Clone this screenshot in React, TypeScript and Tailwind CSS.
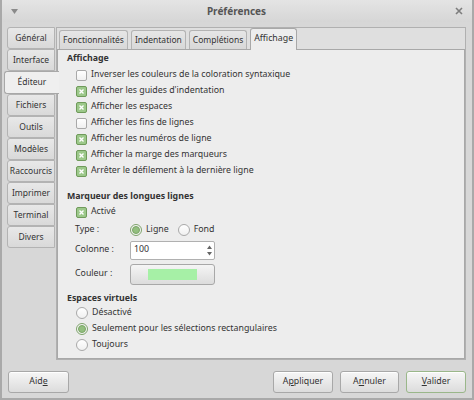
import React from 'react';

const sideTabs = ['Général', 'Interface', 'Éditeur', 'Fichiers', 'Outils', 'Modèles', 'Raccourcis', 'Imprimer', 'Terminal', 'Divers'];
const topTabs = ['Fonctionnalités', 'Indentation', 'Complétions', 'Affichage'];

const displayOptions: [string, boolean][] = [
  ['Inverser les couleurs de la coloration syntaxique', false],
  ["Afficher les guides d'indentation", true],
  ['Afficher les espaces', true],
  ['Afficher les fins de lignes', false],
  ['Afficher les numéros de ligne', true],
  ['Afficher la marge des marqueurs', true],
  ['Arrêter le défilement à la dernière ligne', true],
];

const virtualSpaces: [string, boolean][] = [
  ['Désactivé', false],
  ['Seulement pour les sélections rectangulaires', true],
  ['Toujours', false],
];

function Check({ on }: { on: boolean }) {
  if (!on) {
    return <span className="w-[11px] h-[11px] rounded-[2px] border border-[#a9a9a9] bg-gradient-to-b from-[#ffffff] to-[#f0f0f0] shrink-0" />;
  }
  return (
    <span className="w-[11px] h-[11px] rounded-[2px] border border-[#6f9a5a] bg-[#9cc88a] shrink-0 flex items-center justify-center">
      <svg width="7" height="7" viewBox="0 0 7 7">
        <path d="M1.5 1.5 L5.5 5.5 M5.5 1.5 L1.5 5.5" stroke="#ffffff" strokeWidth="1.4" />
      </svg>
    </span>
  );
}

function Radio({ on }: { on: boolean }) {
  return (
    <span
      className={
        on
          ? 'w-[12px] h-[12px] rounded-full border border-[#7ea36b] bg-[#f4f4f4] shrink-0 flex items-center justify-center'
          : 'w-[12px] h-[12px] rounded-full border border-[#a9a9a9] bg-gradient-to-b from-[#ffffff] to-[#f0f0f0] shrink-0 flex'
      }
    >
      {on && <span className="w-[8px] h-[8px] rounded-full bg-[#93bf7f] border border-[#7aa566]" />}
    </span>
  );
}

function Btn({ label, w, accent }: { label: React.ReactNode; w: string; accent?: boolean }) {
  return (
    <div
      className={`${w} h-[22px] rounded-[3px] border ${accent ? 'border-[#9ab78a]' : 'border-[#a8a8a8]'} bg-gradient-to-b from-[#f6f6f6] to-[#dcdcdc] flex items-center justify-center text-[#333] shadow-[inset_0_1px_0_#ffffff]`}
    >
      {label}
    </div>
  );
}

export default function App() {
  return (
    <div
      className="w-[474px] h-[400px] bg-[#d7d7d7] border-x-[2px] border-b-[2px] border-[#a9a9a9] text-[8.8px] text-[#333] flex flex-col overflow-hidden"
      style={{ fontFamily: '"Noto Sans", "Open Sans", sans-serif' }}
    >
      {/* title bar */}
      <div className="h-[22px] shrink-0 bg-gradient-to-b from-[#e4e4e4] to-[#d6d6d6] flex items-center justify-between px-[9px]">
        <svg width="7" height="5" viewBox="0 0 7 5">
          <path d="M0 0 L7 0 L3.5 5 Z" fill="#8a8a8a" />
        </svg>
        <span className="text-[10px] font-bold text-[#555]">Préférences</span>
        <svg width="8" height="8" viewBox="0 0 8 8">
          <path d="M1 1 L7 7 M7 1 L1 7" stroke="#7d7d7d" strokeWidth="1.6" />
        </svg>
      </div>

      <div className="flex flex-1 pt-[5px]">
        {/* side tabs */}
        <div className="w-[55px] shrink-0 flex flex-col text-[8.5px]">
          {sideTabs.map((t) =>
            t === 'Éditeur' ? (
              <div
                key={t}
                className="ml-[2px] h-[23px] rounded-l-[3px] border border-r-0 border-[#a8a8a8] bg-[#efefef] flex items-center justify-center relative z-10 w-[55px]"
              >
                {t}
              </div>
            ) : (
              <div
                key={t}
                className="ml-[5px] w-[48px] h-[22px] rounded-l-[3px] border border-[#b3b3b3] bg-gradient-to-b from-[#e8e8e8] to-[#d9d9d9] flex items-center justify-center"
              >
                {t}
              </div>
            )
          )}
        </div>

        {/* notebook */}
        <div className="w-[410px] h-[333px] border border-[#b0b0b0] bg-[#dfdfdf] flex flex-col -ml-[1px]">
          <div className="h-[21px] flex items-end pl-[2px] gap-[3px] relative z-10">
            {topTabs.map((t) =>
              t === 'Affichage' ? (
                <div key={t} className="h-[22px] px-[3px] border border-b-0 border-[#a8a8a8] rounded-t-[3px] bg-[#ededed] flex items-start pt-[3px] -mb-[1px]">
                  {t}
                </div>
              ) : (
                <div key={t} className="h-[19px] px-[3px] border border-b-0 border-[#b3b3b3] rounded-t-[3px] bg-gradient-to-b from-[#e6e6e6] to-[#d8d8d8] flex items-center text-[8.5px]">
                  {t}
                </div>
              )
            )}
          </div>

          <div className="flex-1 border border-[#a8a8a8] bg-[#ededed] pl-[9px] pt-[1px]">
            <div className="font-bold h-[16px] flex items-center">Affichage</div>
            {displayOptions.map(([label, on]) => (
              <div key={label} className="h-[16px] flex items-center gap-[4px] pl-[9px]">
                <Check on={on} />
                <span>{label}</span>
              </div>
            ))}

            <div className="font-bold h-[16px] flex items-center mt-[10px]">Marqueur des longues lignes</div>
            <div className="h-[14px] flex items-center gap-[4px] pl-[9px]">
              <Check on />
              <span>Activé</span>
            </div>

            <div className="h-[18px] flex items-center pl-[8px] mt-[2px]">
              <span className="w-[55px]">Type :</span>
              <Radio on />
              <span className="ml-[4px]">Ligne</span>
              <span className="ml-[9px] flex">
                <Radio on={false} />
              </span>
              <span className="ml-[4px]">Fond</span>
            </div>

            <div className="h-[20px] flex items-center pl-[8px] mt-[1px]">
              <span className="w-[55px]">Colonne :</span>
              <div className="w-[85px] h-[19px] border border-[#b0b0b0] rounded-[2px] bg-white flex items-center justify-between pl-[3px] pr-[2px]">
                <span>100</span>
                <svg width="5" height="11" viewBox="0 0 5 11">
                  <path d="M0 4 L2.5 0.5 L5 4 Z M0 7 L2.5 10.5 L5 7 Z" fill="#666" />
                </svg>
              </div>
            </div>

            <div className="h-[22px] flex items-center pl-[8px] mt-[3px]">
              <span className="w-[55px]">Couleur :</span>
              <div className="w-[85px] h-[21px] border border-[#a8a8a8] rounded-[3px] bg-gradient-to-b from-[#f5f5f5] to-[#dcdcdc] flex items-center justify-center">
                <span className="w-[49px] h-[11px] bg-[#a6f0a6]" />
              </div>
            </div>

            <div className="font-bold h-[12px] flex items-center mt-[8px]">Espaces virtuels</div>
            {virtualSpaces.map(([label, on]) => (
              <div key={label} className="h-[16px] flex items-center gap-[4px] pl-[9px]">
                <Radio on={on} />
                <span>{label}</span>
              </div>
            ))}
          </div>
        </div>
      </div>

      {/* dialog buttons */}
      <div className="h-[40px] shrink-0 flex items-center px-[6px] pt-[4px]">
        <Btn w="w-[61px]" label={<span>Aid<u>e</u></span>} />
        <div className="flex-1" />
        <div className="flex gap-[7px]">
          <Btn w="w-[60px]" label={<span>A<u>p</u>pliquer</span>} />
          <Btn w="w-[59px]" label={<span>A<u>n</u>nuler</span>} />
          <Btn w="w-[60px]" accent label={<span><u>V</u>alider</span>} />
        </div>
      </div>
    </div>
  );
}
